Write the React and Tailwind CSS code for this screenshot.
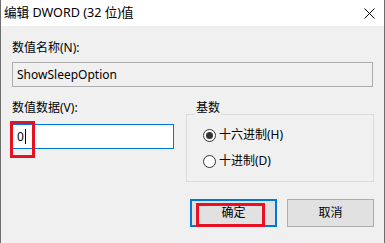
import React from "react";

export default function App() {
  const font = { fontFamily: '"Noto Sans", "Noto Sans CJK SC", sans-serif' };
  return (
    <div
      className="w-[385px] h-[243px] bg-[#f0f0f0] border-x border-[#6e6e6e] flex flex-col text-[12px] text-black overflow-hidden"
      style={font}
    >
      <div className="h-[26px] bg-white flex items-center justify-between pl-[3px] pr-[9px] shrink-0">
        <span className="text-[12.6px] leading-[16px]">编辑 DWORD (32 位)值</span>
        <svg width="11" height="11" viewBox="0 0 11 11" className="text-black">
          <path d="M0.5 0.5 L10.5 10.5 M10.5 0.5 L0.5 10.5" stroke="currentColor" strokeWidth="1" fill="none" />
        </svg>
      </div>
      <div className="flex flex-col pl-[11px] pr-[10px] pt-[14px]">
        <div className="leading-[16px] h-[16px]">数值名称(N):</div>
        <div className="mt-[6px] h-[25px] w-[361px] border border-[#adadad] bg-[#f0f0f0] flex items-center pl-[4px]">
          ShowSleepOption
        </div>
        <div className="flex items-start mt-[13px]">
          <div className="flex flex-col w-[162px]">
            <div className="leading-[16px] h-[16px]">数值数据(V):</div>
            <div className="relative mt-[8px] h-[25px] w-[162px] border border-[#0078d7] bg-white flex items-center pl-[4px]">
              <span>0</span>
              <span className="w-px h-[15px] bg-black ml-[1px]" />
              <div className="absolute left-[-3px] top-[-4px] w-[25px] h-[37px] border-[3px] border-[#e81123]" />
            </div>
          </div>
          <div className="relative ml-[12px] w-[190px] pt-[14px]">
            <span className="absolute left-[9px] top-0 px-[1px] leading-[16px] bg-[#f0f0f0]">基数</span>
            <div className="border border-[#dcdcdc] h-[68px] flex flex-col pl-[16px] pt-[12px] gap-[10px]">
              <label className="flex items-center h-[16px]">
                <span className="w-[13px] h-[13px] rounded-full border border-[#333333] bg-white flex items-center justify-center">
                  <span className="w-[7px] h-[7px] rounded-full bg-[#333333]" />
                </span>
                <span className="ml-[3px] leading-[16px]">十六进制(H)</span>
              </label>
              <label className="flex items-center h-[16px]">
                <span className="w-[13px] h-[13px] rounded-full border border-[#333333] bg-white" />
                <span className="ml-[3px] leading-[16px]">十进制(D)</span>
              </label>
            </div>
          </div>
        </div>
        <div className="flex justify-end gap-[10px] mt-[17px]">
          <div className="relative w-[87px] h-[28px] border-2 border-[#0078d7] bg-[#e1e1e1] flex items-center justify-center">
            <span>确定</span>
            <div className="absolute left-[4px] top-[2px] w-[69px] h-[24px] border-[3px] border-[#e81123]" />
          </div>
          <div className="w-[87px] h-[28px] border border-[#adadad] bg-[#e1e1e1] flex items-center justify-center">
            <span>取消</span>
          </div>
        </div>
      </div>
    </div>
  );
}
